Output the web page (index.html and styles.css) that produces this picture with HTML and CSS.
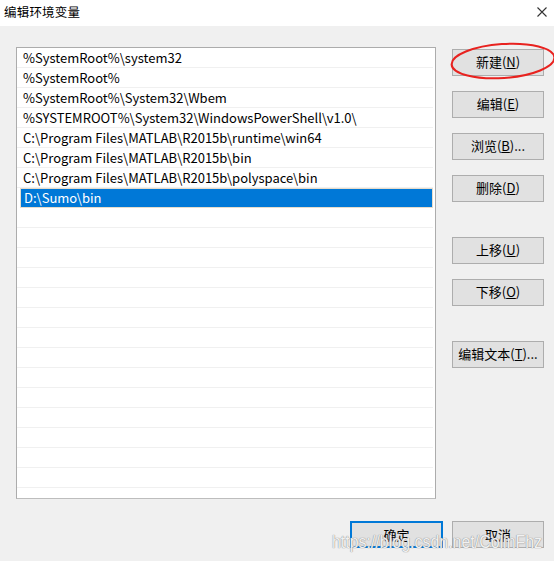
FILE: index.html
```html
<!DOCTYPE html>
<html lang="zh-CN">
<head>
<meta charset="utf-8">
<title>编辑环境变量</title>
<link rel="stylesheet" href="styles.css">
</head>
<body>
<div class="dialog">
  <div class="titlebar">
    <span class="title">编辑环境变量</span>
    <svg class="close" width="10" height="10" viewBox="0 0 10 10"><path d="M0.5 0.5 L9.5 9.5 M9.5 0.5 L0.5 9.5" stroke="#333" stroke-width="1.1" fill="none"/></svg>
  </div>
  <div class="content">
    <div class="main">
      <div class="list">
        <div class="row">%SystemRoot%\system32</div>
        <div class="row">%SystemRoot%</div>
        <div class="row">%SystemRoot%\System32\Wbem</div>
        <div class="row">%SYSTEMROOT%\System32\WindowsPowerShell\v1.0\</div>
        <div class="row">C:\Program Files\MATLAB\R2015b\runtime\win64</div>
        <div class="row">C:\Program Files\MATLAB\R2015b\bin</div>
        <div class="row">C:\Program Files\MATLAB\R2015b\polyspace\bin</div>
        <div class="row selected">D:\Sumo\bin</div>
        <div class="row"></div><div class="row"></div><div class="row"></div><div class="row"></div>
        <div class="row"></div><div class="row"></div><div class="row"></div><div class="row"></div>
        <div class="row"></div><div class="row"></div><div class="row"></div><div class="row"></div>
        <div class="row"></div><div class="row"></div><div class="row"></div>
      </div>
      <div class="side">
        <div class="btn-wrap">
          <button class="btn">新建(<u>N</u>)</button>
          <svg class="ellipse" width="110" height="42" viewBox="0 0 110 42"><ellipse cx="55" cy="21" rx="51.5" ry="17" transform="rotate(-4 55 21)" fill="none" stroke="#e8221f" stroke-width="2"/></svg>
        </div>
        <button class="btn">编辑(<u>E</u>)</button>
        <button class="btn">浏览(<u>B</u>)...</button>
        <button class="btn">删除(<u>D</u>)</button>
        <button class="btn gap1">上移(<u>U</u>)</button>
        <button class="btn">下移(<u>O</u>)</button>
        <button class="btn gap2">编辑文本(<u>T</u>)...</button>
      </div>
    </div>
    <div class="footer">
      <button class="btn default">确定</button>
      <button class="btn">取消</button>
    </div>
    <div class="watermark">https://blog.csdn.net/ColinFhz</div>
  </div>
</div>
</body>
</html>
```
FILE: styles.css
```css
* { box-sizing: border-box; }
html, body {
  margin: 0;
  padding: 0;
  width: 554px;
  height: 561px;
  overflow: hidden;
  background: #f0f0f0;
  font-family: "Noto Sans CJK SC", "Noto Sans", sans-serif;
  color: #000;
}
.dialog {
  width: 554px;
  height: 561px;
  display: flex;
  flex-direction: column;
}
.titlebar {
  height: 26px;
  background: #fff;
  display: flex;
  align-items: center;
  justify-content: space-between;
  padding: 0 7px 3px 4px;
}
.title {
  font-size: 12.5px;
  color: #000;
  letter-spacing: 0.2px;
}
.close { display: block; margin-top: 1px; }
.content {
  flex: 1;
  position: relative;
  padding: 21px 10px 0 16px;
}
.main {
  display: flex;
  gap: 16px;
}
.list {
  width: 420px;
  height: 452px;
  background: #fff;
  border: 1px solid #acacac;
  border-bottom-color: #bdbdbd;
  overflow: hidden;
  padding-right: 2px;
}
.row {
  height: 20px;
  line-height: 20px;
  border-bottom: 1px solid #f0f0f0;
  font-size: 13px;
  padding-left: 6px;
  white-space: nowrap;
}
.selected {
  background: #0078d7;
  color: #fff;
  margin-left: 3px;
  padding-left: 3px;
  border: 1px solid #e6dccc;
  line-height: 18px;
}
.side {
  display: flex;
  flex-direction: column;
  align-items: flex-start;
  gap: 15px;
  padding-top: 1px;
}
.btn {
  width: 92px;
  height: 27px;
  background: #e1e1e1;
  border: 1px solid #adadad;
  font-family: "Noto Sans CJK SC", "Noto Sans", sans-serif;
  font-size: 13px;
  color: #000;
  padding: 0;
  line-height: 24px;
}
.btn u { text-underline-offset: 1px; }
.btn-wrap { position: relative; }
.ellipse {
  position: absolute;
  left: -4px;
  top: -8px;
}
.gap1 { margin-top: 20px; }
.gap2 { margin-top: 20px; }
.footer {
  display: flex;
  justify-content: flex-end;
  gap: 9px;
  padding-top: 22px;
}
.footer .btn.default {
  width: 93px;
  border: 2px solid #0078d7;
}
.footer .btn { width: 92px; }
.watermark {
  position: absolute;
  left: 332px;
  top: 506px;
  font-family: "Liberation Sans", Arial, sans-serif;
  font-size: 18px;
  color: rgba(255, 255, 255, 0.88);
  text-shadow: 0 0 1px #8f8f8f, 0 0 1px #8f8f8f;
  white-space: nowrap;
  transform: scaleX(0.886);
  transform-origin: left top;
}
```
